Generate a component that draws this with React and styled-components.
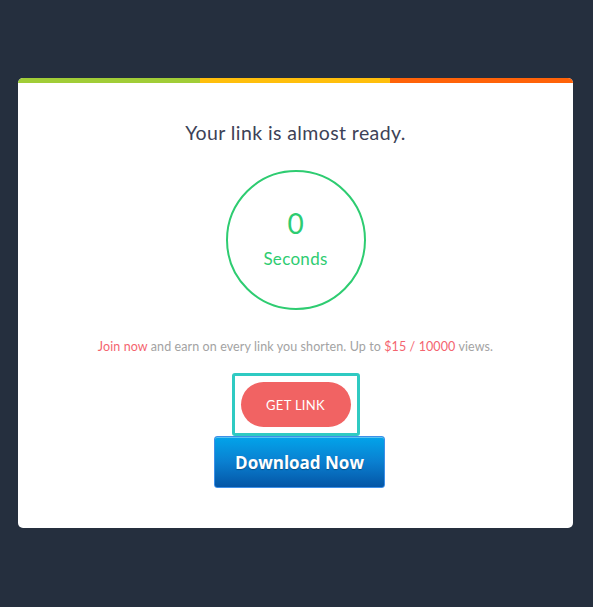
import React from 'react';
import styled, { createGlobalStyle } from 'styled-components';

const GlobalStyle = createGlobalStyle`
  html, body {
    margin: 0;
    padding: 0;
    background: #252f3e;
  }
  body {
    font-family: Lato, "Open Sans", sans-serif;
  }
`;

const Page = styled.div`
  min-height: 607px;
  padding: 78px 20px 0 18px;
  box-sizing: border-box;
`;

const Card = styled.div`
  background: #fff;
  border-radius: 5px;
  overflow: hidden;
  padding-bottom: 40px;
`;

const ColorBar = styled.div`
  display: flex;
  height: 5px;
`;

const BarPart = styled.div`
  flex: ${props => props.grow};
  background: ${props => props.color};
`;

const Body = styled.div`
  display: flex;
  flex-direction: column;
  align-items: center;
`;

const Title = styled.h2`
  margin: 38px 0 0;
  font-size: 19.5px;
  font-weight: 400;
  letter-spacing: 0.4px;
  color: #3d4257;
  line-height: 24px;
`;

const Timer = styled.div`
  margin-top: 25px;
  padding-top: 4px;
  width: 140px;
  height: 140px;
  box-sizing: border-box;
  border: 2px solid #2ecc71;
  border-radius: 50%;
  display: flex;
  flex-direction: column;
  align-items: center;
  justify-content: center;
  color: #2ecc71;
`;

const Count = styled.span`
  font-size: 28px;
  line-height: 32px;
  margin-top: -8px;
`;

const Unit = styled.span`
  font-size: 17px;
  line-height: 20px;
  margin-top: 10px;
  letter-spacing: 0.3px;
`;

const Promo = styled.p`
  margin: 29px 0 0;
  font-size: 12.5px;
  letter-spacing: 0.1px;
  line-height: 16px;
  color: #a3a3a3;
`;

const Accent = styled.span`
  color: #f4646f;
`;

const Highlight = styled.div`
  margin-top: 18px;
  padding: 6px;
  border: 3px solid #2fcac2;
  border-radius: 3px;
`;

const GetLinkButton = styled.button`
  display: block;
  width: 110px;
  height: 45px;
  border: none;
  border-radius: 23px;
  background: #f16363;
  color: #fff;
  font-family: Lato, sans-serif;
  font-size: 13px;
  letter-spacing: 0.3px;
  cursor: pointer;
`;

const DownloadButton = styled.button`
  margin: 0 0 0 8px;
  width: 171px;
  height: 52px;
  border: 1px solid #3d8fe8;
  border-radius: 3px;
  background: linear-gradient(to bottom, #02a4ea 0%, #0a7fd0 50%, #0456a6 100%);
  box-shadow: inset 0 1px 0 rgba(255, 255, 255, 0.35);
  color: #fff;
  font-family: "Open Sans", sans-serif;
  font-weight: 700;
  font-size: 17px;
  text-shadow: 0 1px 1px rgba(0, 0, 0, 0.3);
  cursor: pointer;
`;

export default function App() {
  return (
    <>
      <GlobalStyle />
      <Page>
        <Card>
          <ColorBar>
            <BarPart grow={182} color="#a1cd37" />
            <BarPart grow={190} color="#ffbf0c" />
            <BarPart grow={183} color="#ff6309" />
          </ColorBar>
          <Body>
            <Title>Your link is almost ready.</Title>
            <Timer>
              <Count>0</Count>
              <Unit>Seconds</Unit>
            </Timer>
            <Promo>
              <Accent>Join now</Accent> and earn on every link you shorten. Up to{' '}
              <Accent>$15 / 10000</Accent> views.
            </Promo>
            <Highlight>
              <GetLinkButton>GET LINK</GetLinkButton>
            </Highlight>
            <DownloadButton>Download Now</DownloadButton>
          </Body>
        </Card>
      </Page>
    </>
  );
}
